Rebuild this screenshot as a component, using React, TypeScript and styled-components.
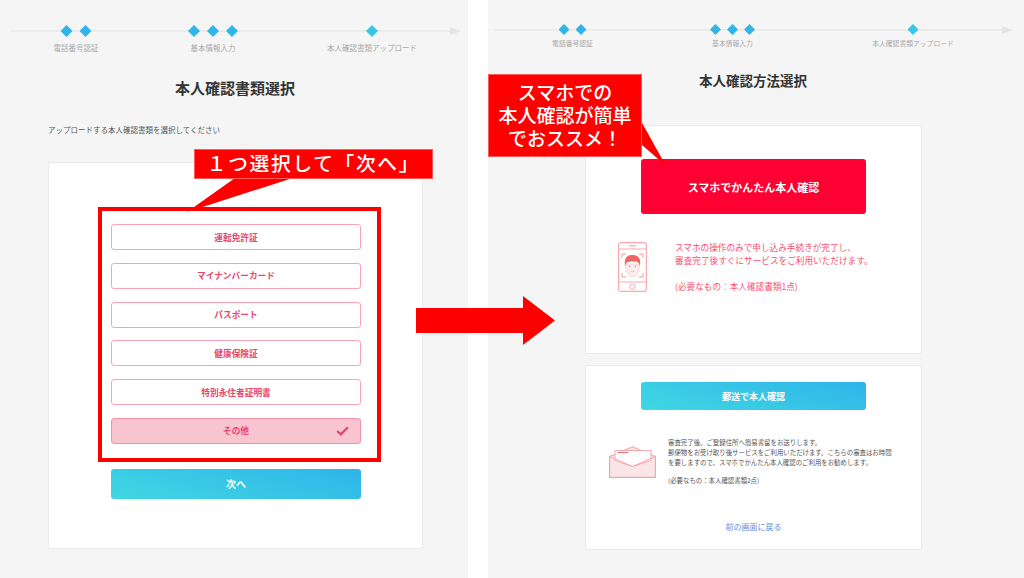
import styled, { createGlobalStyle } from 'styled-components';

const FONT = `"Noto Sans CJK JP", "Noto Sans", sans-serif`;
const GRADIENT = 'linear-gradient(15deg, #3fd8e2 0%, #2fb4ea 100%)';

const GlobalStyle = createGlobalStyle`
  html, body {
    margin: 0;
    background: #fff;
    font-family: ${FONT};
  }
  * { box-sizing: border-box; }
`;

const Page = styled.div`
  position: relative;
  display: flex;
  gap: 20px;
  width: 1024px;
  height: 578px;
  overflow: hidden;
`;

const Panel = styled.section<{ $width: number }>`
  flex: none;
  width: ${p => p.$width}px;
  height: 100%;
  background: #f5f5f5;
`;

const Stepper = styled.div<{ $top: number; $left: number; $columns: string; $lineWidth: number }>`
  position: relative;
  display: grid;
  grid-template-columns: ${p => p.$columns};
  padding: ${p => p.$top}px 0 0 ${p => p.$left}px;

  &::before {
    content: '';
    position: absolute;
    left: ${p => p.$left}px;
    top: ${p => p.$top + 5}px;
    width: ${p => p.$lineWidth}px;
    height: 2px;
    background: #ebebeb;
  }

  &::after {
    content: '';
    position: absolute;
    left: ${p => p.$left + p.$lineWidth - 10}px;
    top: ${p => p.$top + 2}px;
    border-left: 11px solid #e4e4e4;
    border-top: 4px solid transparent;
    border-bottom: 4px solid transparent;
  }
`;

const Step = styled.div`
  position: relative;
  z-index: 1;
  display: flex;
  flex-direction: column;
  align-items: center;
`;

const Diamonds = styled.div<{ $gap: number }>`
  display: flex;
  gap: ${p => p.$gap}px;
`;

const Diamond = styled.span<{ $size: number; $last?: boolean }>`
  width: ${p => p.$size}px;
  height: ${p => p.$size}px;
  background: ${p => (p.$last ? '#38c6e5' : '#2fb5ea')};
  clip-path: polygon(50% 0, 100% 50%, 50% 100%, 0 50%);
`;

const StepLabel = styled.span<{ $size: number; $gap: number }>`
  margin-top: ${p => p.$gap}px;
  font-size: ${p => p.$size}px;
  line-height: 11px;
  color: #a9a9a9;
  white-space: nowrap;
`;

const Title = styled.h1<{ $size: number; $top: number; $shift: number }>`
  margin: ${p => p.$top}px 0 0;
  padding-left: ${p => Math.max(p.$shift, 0)}px;
  padding-right: ${p => Math.max(-p.$shift, 0)}px;
  font-size: ${p => p.$size}px;
  line-height: 20px;
  font-weight: 700;
  color: #333;
  text-align: center;
`;

const Lead = styled.p`
  margin: 26px 0 0 48px;
  font-size: 7.5px;
  line-height: 12px;
  color: #555;
`;

const DocumentCard = styled.div`
  display: flex;
  flex-direction: column;
  align-items: center;
  width: 375px;
  height: 387px;
  margin: 26px 0 0 48px;
  padding: 61px 0 0 1px;
  background: #fff;
  border: 1px solid #eaeaea;
  border-radius: 3px;
`;

const OptionList = styled.div`
  display: flex;
  flex-direction: column;
  gap: 12.8px;
  width: 250px;
`;

const Option = styled.div<{ $selected?: boolean }>`
  position: relative;
  display: flex;
  align-items: center;
  justify-content: center;
  height: 26px;
  font-size: 8.7px;
  font-weight: 700;
  color: #e8476a;
  background: ${p => (p.$selected ? '#f8c4cf' : '#fff')};
  border: 1px solid ${p => (p.$selected ? '#f592a8' : '#fba3b5')};
  border-radius: 3px;
`;

const Check = styled.svg`
  position: absolute;
  right: 11px;
  top: 7px;
  width: 13px;
  height: 10px;
`;

const GradientButton = styled.div<{ $height: number; $size: number }>`
  display: flex;
  align-items: center;
  justify-content: center;
  flex: none;
  width: ${p => (p.$height === 30 ? 250 : 225)}px;
  height: ${p => p.$height}px;
  font-size: ${p => p.$size}px;
  font-weight: 700;
  color: #fff;
  background: ${GRADIENT};
  border-radius: 3px;
`;

const NextButton = styled(GradientButton)`
  margin-top: 25px;
`;

const MethodCard = styled.div<{ $height: number; $top: number; $pad: number }>`
  width: 337px;
  height: ${p => p.$height}px;
  margin: ${p => p.$top}px 0 0 97px;
  padding-top: ${p => p.$pad}px;
  background: #fff;
  border: 1px solid #eaeaea;
  border-radius: 3px;
`;

const PrimaryButton = styled.div`
  display: flex;
  align-items: center;
  justify-content: center;
  width: 225px;
  height: 55px;
  margin-left: 55px;
  font-size: 11px;
  font-weight: 700;
  color: #fff;
  background: #ff0033;
  border-radius: 3px;
`;

const MailButton = styled(GradientButton)`
  margin-left: 55px;
`;

const MethodBody = styled.div<{ $left: number; $gap: number; $top: number }>`
  display: flex;
  align-items: flex-start;
  gap: ${p => p.$gap}px;
  margin: ${p => p.$top}px 0 0 ${p => p.$left}px;
`;

const PhoneIcon = styled.svg`
  flex: none;
  width: 29px;
  height: 50px;
  margin-top: 1px;
`;

const EnvelopeIcon = styled.svg`
  flex: none;
  width: 47px;
  height: 32px;
  margin-top: 8px;
`;

const PhoneText = styled.div`
  font-size: 8.65px;
  line-height: 13px;
  color: #fb4f74;
  white-space: nowrap;
`;

const MailText = styled.div`
  font-size: 6.42px;
  line-height: 10px;
  color: #555;
  white-space: nowrap;
`;

const Note = styled.div<{ $gap: number }>`
  margin-top: ${p => p.$gap}px;
`;

const BackLink = styled.a`
  display: block;
  margin-top: 35px;
  font-size: 8px;
  line-height: 12px;
  color: #5b8de0;
  text-align: center;
`;

const RedFrame = styled.div`
  position: absolute;
  left: 98px;
  top: 207px;
  width: 283px;
  height: 255px;
  border: 4.5px solid #ff0000;
`;

const Callout = styled.div`
  position: absolute;
  display: flex;
  flex-direction: column;
  align-items: center;
  justify-content: center;
  color: #fff;
  background: #ff0000;
  border: 1px solid #ff5a5a;
  font-weight: 500;
  text-align: center;
  white-space: nowrap;
`;

const PickCallout = styled(Callout)`
  left: 194px;
  top: 149px;
  width: 239px;
  height: 30px;
  padding-bottom: 3px;
  font-size: 19.7px;
  line-height: 24px;
  letter-spacing: 1.7px;
`;

const PhoneCallout = styled(Callout)`
  left: 488px;
  top: 74px;
  width: 154px;
  height: 83px;
  padding-bottom: 2px;
  font-size: 19px;
`;

const CalloutLine = styled.span`
  display: block;
  height: 23px;
  line-height: 23px;
`;

const Overlay = styled.svg`
  position: absolute;
  left: 0;
  top: 0;
  width: 1024px;
  height: 578px;
  pointer-events: none;
`;

const documents = ['運転免許証', 'マイナンバーカード', 'パスポート', '健康保険証', '特別永住者証明書'];

type StepDef = { label: string; dots: number };
const steps: StepDef[] = [
  { label: '電話番号認証', dots: 2 },
  { label: '基本情報入力', dots: 3 },
  { label: '本人確認書類アップロード', dots: 1 },
];

const Progress = ({ top, left, columns, lineWidth, size, gap, labelSize, labelGap }: {
  top: number; left: number; columns: string; lineWidth: number;
  size: number; gap: number; labelSize: number; labelGap: number;
}) => (
  <Stepper $top={top} $left={left} $columns={columns} $lineWidth={lineWidth}>
    {steps.map(step => (
      <Step key={step.label}>
        <Diamonds $gap={gap}>
          {Array.from({ length: step.dots }).map((_, i) => (
            <Diamond key={i} $size={size} $last={step.dots === 1} />
          ))}
        </Diamonds>
        <StepLabel $size={labelSize} $gap={labelGap}>{step.label}</StepLabel>
      </Step>
    ))}
  </Stepper>
);

const App = () => (
  <>
    <GlobalStyle />
    <Page>
      <Panel $width={468}>
        <Progress top={25} left={11} columns="130px 144px 174px" lineWidth={449} size={12} gap={7} labelSize={7.5} labelGap={5} />
        <Title $size={15} $top={25} $shift={2}>本人確認書類選択</Title>
        <Lead>アップロードする本人確認書類を選択してください</Lead>
        <DocumentCard>
          <OptionList>
            {documents.map(name => <Option key={name}>{name}</Option>)}
            <Option $selected>
              その他
              <Check viewBox="0 0 13 10">
                <path d="M1.2 5 L4.8 8.4 L11.8 1.4" fill="none" stroke="#e8476a" strokeWidth="2.2" />
              </Check>
            </Option>
          </OptionList>
          <NextButton $height={30} $size={10}>次へ</NextButton>
        </DocumentCard>
      </Panel>

      <Panel $width={536}>
        <Progress top={24} left={6} columns="157px 163px 198px" lineWidth={518} size={11} gap={6} labelSize={6.8} labelGap={3} />
        <Title $size={13.5} $top={21} $shift={-6}>本人確認方法選択</Title>
        <MethodCard $height={229} $top={35} $pad={33}>
          <PrimaryButton>スマホでかんたん本人確認</PrimaryButton>
          <MethodBody $left={32} $gap={28} $top={27}>
            <PhoneIcon viewBox="0 0 29 50">
              <rect x="0.6" y="0.6" width="27.8" height="48.8" rx="2.5" fill="#fff" stroke="#f9a8b0" strokeWidth="1.2" />
              <path d="M1 7 H28 M1 40 H28" stroke="#f9a8b0" strokeWidth="1" />
              <path d="M11 3.8 H18" stroke="#f9a8b0" strokeWidth="1.2" />
              <circle cx="14.5" cy="44.8" r="2.6" fill="none" stroke="#f9a8b0" strokeWidth="1" />
              <path d="M4 16 V12 H8 M21 12 H25 V16 M4 31 V35 H8 M21 35 H25 V31" fill="none" stroke="#f08f95" strokeWidth="0.9" />
              <path d="M7.6 22 C7.6 31 11 34.5 14.5 34.5 C18 34.5 21.4 31 21.4 22 Z" fill="#fdeeee" stroke="#f9b8bc" strokeWidth="0.6" />
              <path d="M7 24 C5.5 14 11 13 14.5 13 C19 13 23.5 15 22 24 C21 20 19 19.5 14.5 19.5 C10 19.5 8 20 7 24 Z" fill="#ee6767" />
              <circle cx="11.6" cy="24.5" r="0.7" fill="#e76a6a" />
              <circle cx="17.4" cy="24.5" r="0.7" fill="#e76a6a" />
              <path d="M12.6 29 Q14.5 30.4 16.4 29" fill="none" stroke="#ee8a8a" strokeWidth="0.6" />
            </PhoneIcon>
            <PhoneText>
              スマホの操作のみで申し込み手続きが完了し、<br />
              審査完了後すぐにサービスをご利用いただけます。
              <Note $gap={13}>(必要なもの：本人確認書類1点)</Note>
            </PhoneText>
          </MethodBody>
        </MethodCard>
        <MethodCard $height={185} $top={11} $pad={16}>
          <MailButton $height={28} $size={9}>郵送で本人確認</MailButton>
          <MethodBody $left={23} $gap={12} $top={28}>
            <EnvelopeIcon viewBox="0 0 47 32">
              <path d="M0.6 10.5 L23.5 0.8 L46.4 10.5 V31.4 H0.6 Z" fill="#fae6e8" stroke="#f9a0a8" strokeWidth="1.1" />
              <path d="M6 4.5 H42 V14.5 L23.5 20.5 L6 14.5 Z" fill="#fff" stroke="#f9a0a8" strokeWidth="0.9" />
              <path d="M8.5 6.5 H19" stroke="#ee6b72" strokeWidth="1.1" />
              <path d="M0.6 10.5 L23.5 20.5 L46.4 10.5" fill="none" stroke="#f9a0a8" strokeWidth="1" />
            </EnvelopeIcon>
            <MailText>
              審査完了後、ご登録住所へ簡易書留をお送りします。<br />
              郵便物をお受け取り後サービスをご利用いただけます。こちらの審査はお時間<br />
              を要しますので、スマホでかんたん本人確認のご利用をお勧めします。
              <Note $gap={8}>(必要なもの：本人確認書類2点)</Note>
            </MailText>
          </MethodBody>
          <BackLink>前の画面に戻る</BackLink>
        </MethodCard>
      </Panel>

      <RedFrame />
      <Overlay viewBox="0 0 1024 578">
        <polygon points="235,178 293,178 187,212" fill="#ff0000" />
        <polygon points="641,121 666,166 641,144" fill="#ff0000" />
        <polygon points="416,308 523,308 523,296 555,320.5 523,345 523,333 416,333" fill="#ff0000" />
      </Overlay>
      <PickCallout>１つ選択して「次へ」</PickCallout>
      <PhoneCallout>
        <CalloutLine>スマホでの</CalloutLine>
        <CalloutLine>本人確認が簡単</CalloutLine>
        <CalloutLine>でおススメ！</CalloutLine>
      </PhoneCallout>
    </Page>
  </>
);

export default App;
